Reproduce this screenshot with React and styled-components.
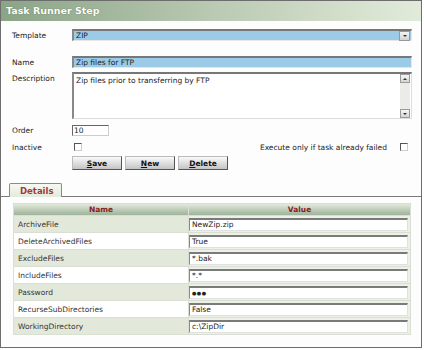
import React from 'react'
import styled, { createGlobalStyle } from 'styled-components'

const Global = createGlobalStyle`
  body {
    margin: 0;
    background: #fff;
    font-family: "DejaVu Sans", Verdana, sans-serif;
  }
`

const Frame = styled.div`
  width: 422px;
  height: 348px;
  box-sizing: border-box;
  border: 1px solid #6d6d6d;
  border-top: none;
  background: #fdfdfd;
  font-size: 7.5px;
  color: #222;
`

const TitleBar = styled.div`
  height: 21px;
  box-sizing: border-box;
  padding: 4px 0 0 5px;
  background: linear-gradient(to right, #8aa486, #b9c9b2 50%, #e2ebda);
  border-top: 1px solid #6d6d6d;
  color: #fff;
  font-size: 9.5px;
  font-weight: bold;
  text-shadow: 0 0 1px #55664f;
`

const Form = styled.div`
  padding: 8px 9px 0 11px;
`

const Row = styled.div`
  display: flex;
  align-items: ${p => p.$top ? 'flex-start' : 'center'};
  margin-top: ${p => p.$mt || 0}px;
  height: ${p => p.$h}px;
  padding-right: ${p => p.$pr || 0}px;
`

const Label = styled.div`
  width: 60px;
  flex: none;
  padding-top: ${p => p.$pt || 0}px;
`

const BlueField = styled.div`
  position: relative;
  flex: 1;
  height: 12px;
  box-sizing: border-box;
  background: #9ccbe7;
  border-top: 2px solid #777;
  border-left: 2px solid #888;
  border-right: 1px solid #e6e6e6;
  border-bottom: 1px solid #e6e6e6;
  padding: 1px 0 0 2px;
  line-height: 8px;
`

const DropButton = styled.div`
  position: absolute;
  right: 1px;
  top: 0;
  width: 9px;
  height: 8px;
  background: linear-gradient(#f4f4f4, #d2d2d2);
  border: 1px solid #999;
  display: flex;
  align-items: center;
  justify-content: center;
`

const Arrow = styled.div`
  width: 0;
  height: 0;
  border-left: 2px solid transparent;
  border-right: 2px solid transparent;
  ${p => p.$up ? 'border-bottom: 2px solid #333;' : 'border-top: 2px solid #333;'}
`

const TextArea = styled.div`
  position: relative;
  flex: 1;
  height: 47px;
  box-sizing: border-box;
  background: #fff;
  border-top: 2px solid #777;
  border-left: 2px solid #888;
  border-right: 1px solid #ddd;
  border-bottom: 1px solid #ddd;
  padding: 2px 0 0 2px;
`

const ScrollBar = styled.div`
  position: absolute;
  right: 1px;
  top: 0;
  bottom: 0;
  width: 10px;
  background: #ebebe8;
  display: flex;
  flex-direction: column;
  justify-content: space-between;
`

const ScrollBtn = styled.div`
  height: 9px;
  box-sizing: border-box;
  background: linear-gradient(#f6f6f6, #d4d4d4);
  border: 1px solid #9a9a9a;
  display: flex;
  align-items: center;
  justify-content: center;
`

const SmallInput = styled.div`
  width: 37px;
  height: 11px;
  box-sizing: border-box;
  background: #fff;
  border-top: 1px solid #666;
  border-left: 1px solid #666;
  border-right: 1px solid #ccc;
  border-bottom: 1px solid #ccc;
  padding: 1px 0 0 1px;
  line-height: 8px;
`

const Check = styled.div`
  width: 8px;
  height: 8px;
  box-sizing: border-box;
  background: #fff;
  border-top: 1px solid #555;
  border-left: 1px solid #555;
  border-right: 1px solid #ccc;
  border-bottom: 1px solid #ccc;
  margin-left: ${p => p.$ml || 0}px;
`

const Spacer = styled.div`
  flex: 1;
`

const Buttons = styled.div`
  display: flex;
  gap: 3px;
  margin: 4px 0 0 60px;
`

const Button = styled.div`
  width: 50px;
  height: 14px;
  box-sizing: border-box;
  border: 1px solid #555;
  border-top-color: #bbb;
  border-left-color: #bbb;
  background: linear-gradient(#fafafa, #dcdcdc 55%, #c4c4c4);
  display: flex;
  align-items: center;
  justify-content: center;
  font-weight: bold;
  color: #111;
  u { text-decoration: underline; }
`

const TabStrip = styled.div`
  margin-top: 12px;
  height: 14px;
  border-bottom: 1px solid #7a7a7a;
  padding-left: 8px;
  display: flex;
  align-items: flex-end;
`

const Tab = styled.div`
  width: 53px;
  height: 14px;
  box-sizing: border-box;
  border: 1px solid #8a8a8a;
  border-bottom: none;
  border-radius: 2px 2px 0 0;
  background: linear-gradient(#f6f9f2, #e3ebdc);
  color: #a33a3a;
  font-weight: bold;
  font-size: 8.5px;
  padding: 2px 0 0 10px;
  margin-bottom: -1px;
  position: relative;
  z-index: 1;
`

const Table = styled.table`
  margin: 6px 0 0 12px;
  width: 398px;
  border-collapse: separate;
  border-spacing: 1px;
  table-layout: fixed;
  font-size: 7.5px;
  background: #d9dfd3;
`

const Th = styled.th`
  height: 11px;
  padding: 0;
  background: linear-gradient(#e2eadc, #b8c8b3 60%, #9fb39b);
  color: #8c1c1c;
  font-weight: bold;
  text-align: center;
  width: ${p => p.$w || 'auto'};
`

const Td = styled.td`
  height: 16px;
  padding: 0 0 0 4px;
  background: ${p => p.$odd ? '#e3e9da' : '#fff'};
  color: #333;
`

const ValueTd = styled.td`
  height: 16px;
  padding: 0 2px 0 0;
  background: #ecf0e7;
`

const ValueInput = styled.div`
  height: 13px;
  box-sizing: border-box;
  background: #fff;
  border-top: 2px solid #7a7a7a;
  border-left: 1px solid #8a8a8a;
  border-right: 1px solid #e0e0e0;
  border-bottom: 1px solid #e0e0e0;
  padding: 1px 0 0 2px;
  line-height: 8px;
  color: #222;
  font-size: ${p => p.$dots ? '5px' : '7.5px'};
  letter-spacing: ${p => p.$dots ? '0.5px' : '0'};
`

const rows = [
  ['ArchiveFile', 'NewZip.zip'],
  ['DeleteArchivedFiles', 'True'],
  ['ExcludeFiles', '*.bak'],
  ['IncludeFiles', '*.*'],
  ['Password', '\u25CF\u25CF\u25CF', true],
  ['RecurseSubDirectories', 'False'],
  ['WorkingDirectory', 'c:\\ZipDir'],
]

export default function App() {
  return (
    <>
      <Global />
      <Frame>
        <TitleBar>Task Runner Step</TitleBar>
        <Form>
          <Row $h={12}>
            <Label>Template</Label>
            <BlueField>
              ZIP
              <DropButton><Arrow /></DropButton>
            </BlueField>
          </Row>
          <Row $h={12} $mt={15}>
            <Label>Name</Label>
            <BlueField>Zip files for FTP</BlueField>
          </Row>
          <Row $h={47} $mt={4} $top>
            <Label $pt={2}>Description</Label>
            <TextArea>
              Zip files prior to transferring by FTP
              <ScrollBar>
                <ScrollBtn><Arrow $up /></ScrollBtn>
                <ScrollBtn><Arrow /></ScrollBtn>
              </ScrollBar>
            </TextArea>
          </Row>
          <Row $h={11} $mt={6}>
            <Label>Order</Label>
            <SmallInput>10</SmallInput>
          </Row>
          <Row $h={10} $mt={6} $pr={4}>
            <Label>Inactive</Label>
            <Check $ml={2} />
            <Spacer />
            <span>Execute only if task already failed</span>
            <Check $ml={13} />
          </Row>
          <Buttons>
            <Button><u>S</u>ave</Button>
            <Button><u>N</u>ew</Button>
            <Button><u>D</u>elete</Button>
          </Buttons>
        </Form>
        <TabStrip>
          <Tab>Details</Tab>
        </TabStrip>
        <Table>
          <thead>
            <tr>
              <Th $w="174px">Name</Th>
              <Th>Value</Th>
            </tr>
          </thead>
          <tbody>
            {rows.map(([name, value, dots], i) => (
              <tr key={name}>
                <Td $odd={i % 2 === 0}>{name}</Td>
                <ValueTd><ValueInput $dots={dots}>{value}</ValueInput></ValueTd>
              </tr>
            ))}
          </tbody>
        </Table>
      </Frame>
    </>
  )
}
